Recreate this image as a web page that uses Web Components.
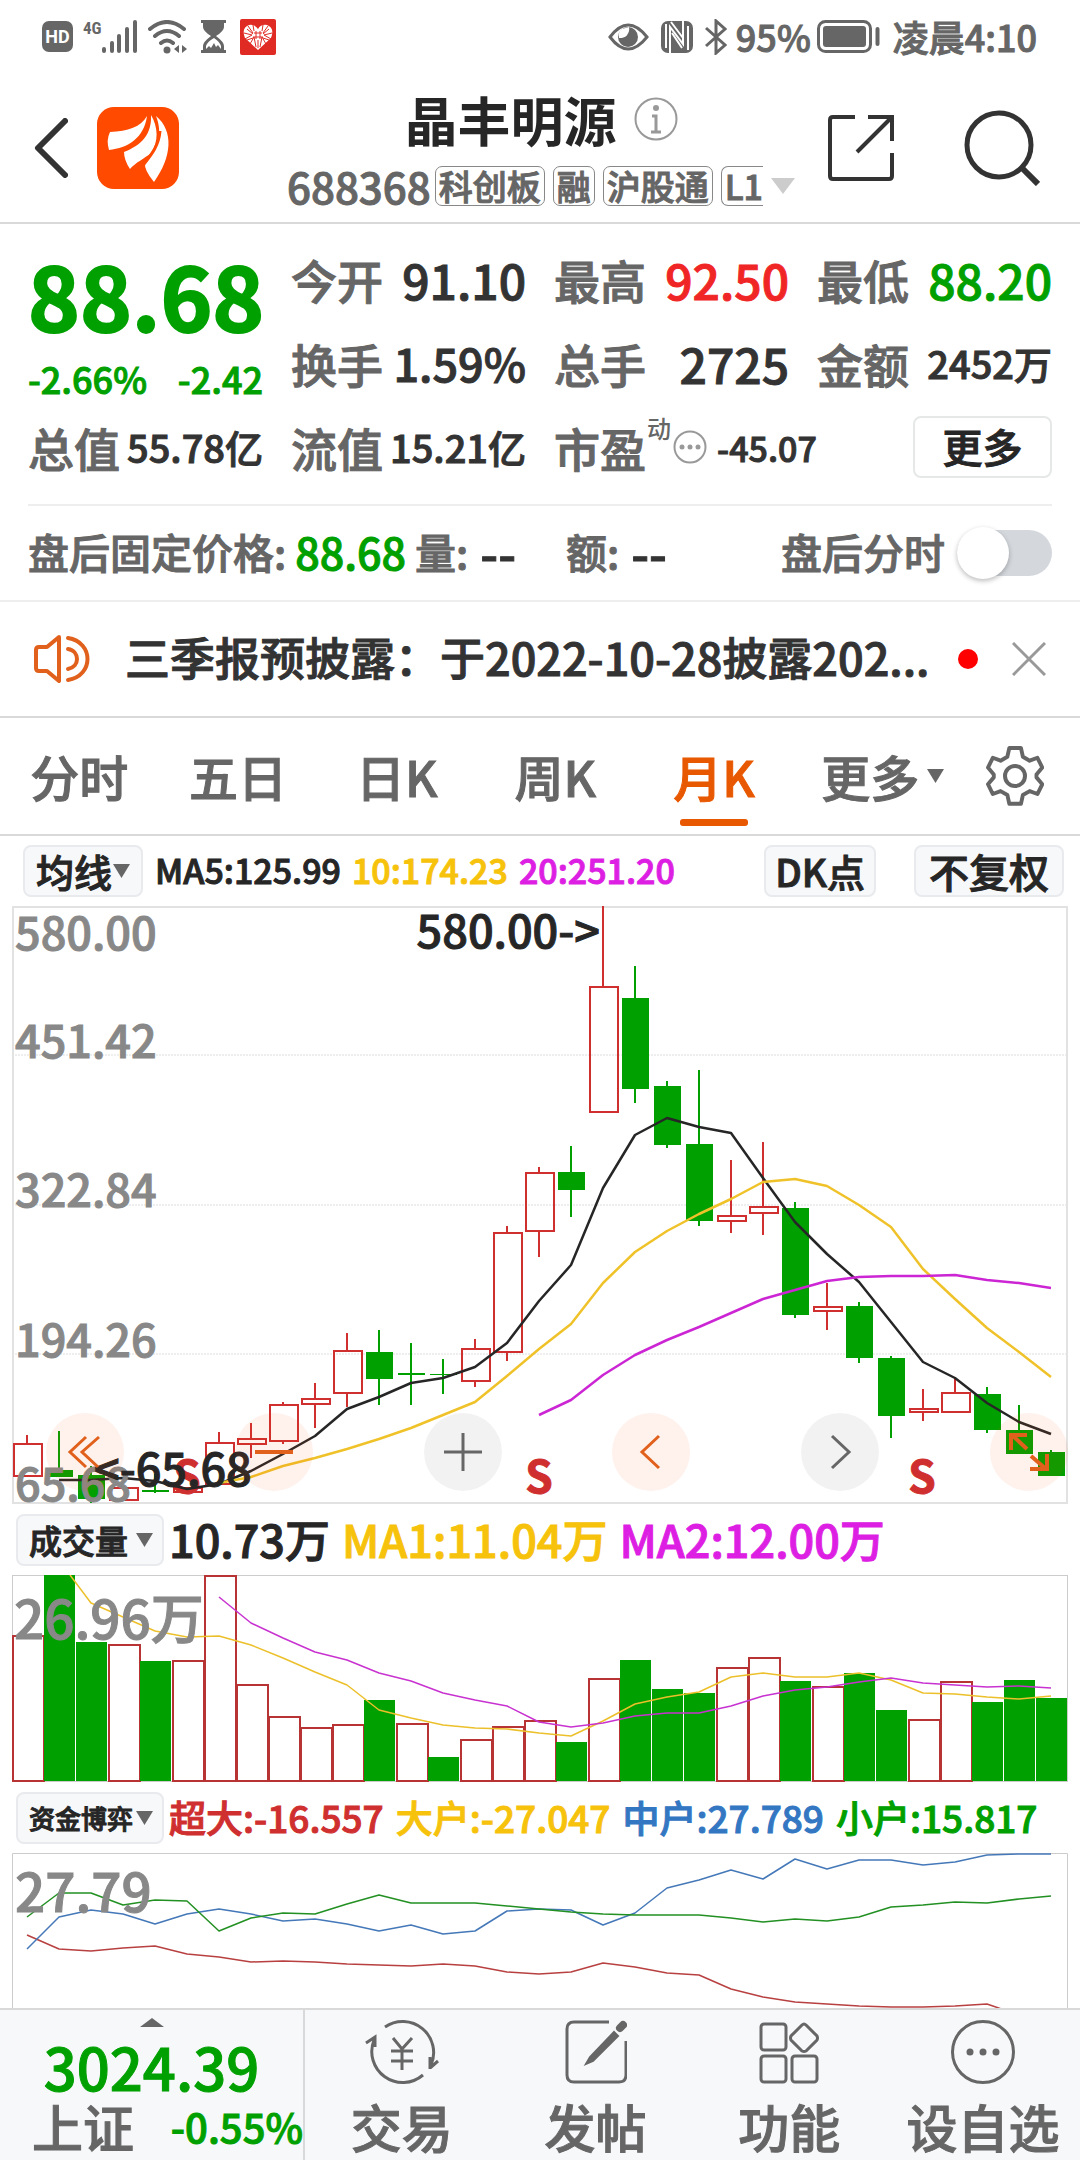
<!DOCTYPE html>
<html lang="zh-CN">
<head>
<meta charset="utf-8">
<meta name="viewport" content="width=device-width, initial-scale=1">
<title>晶丰明源 688368</title>
<style>
:root{--ink:#333;--dark:#262626;--grey:#666;--up:#f02626;--down:#00a000;--accent:#e85800;--line:#d9d9d9;--yellow:#f6c20c;--purple:#dd1fe3;--blue:#3377c3;--red:#cf2f2f}
body{margin:0;background:#fff;color:var(--ink);font-family:"Noto Sans CJK SC","Noto Sans",sans-serif;font-weight:500;-webkit-text-stroke:1px currentColor}
</style>
</head>
<body>
<stock-app></stock-app>
<script>
const BASE = `*{box-sizing:border-box}:host{display:block}
button{font:inherit;color:inherit;background:none;border:0;padding:0;margin:0;display:flex;align-items:center;justify-content:center}
a{color:inherit;text-decoration:none}svg{display:block;flex:none}`;
const define = (name, css, html) => customElements.define(name, class extends HTMLElement {
  connectedCallback() {
    if (this.shadowRoot) return;
    const root = this.attachShadow({mode: 'open'});
    root.innerHTML = `<style>${BASE}${css}</style>` + (typeof html === 'function' ? html(this) : html);
  }
});

/* ---------- status bar ---------- */
define('status-bar', `
:host{display:flex;justify-content:space-between;align-items:center;height:75px;padding:0 43px 2px 42px;color:#666;font-size:36px;line-height:44px}
.g{display:flex;align-items:center}
.hd,.net{-webkit-text-stroke:0}
.hd{width:31px;height:31px;border-radius:7px;background:#666;color:#fff;font:700 18px/31px Roboto,sans-serif;text-align:center}
.net{align-self:flex-start;font:700 17px/18px "Roboto Condensed",Roboto,sans-serif;margin:0 0 0 10px}
.pct{margin:0 6px 0 9px;padding-bottom:2px}.time{margin-left:13px;padding-bottom:2px}`, `
<div class="g"><span class="hd">HD</span><span class="net">4G</span>
<svg width="35" height="33" viewBox="0 0 35 33" stroke="#666" stroke-width="4" stroke-linecap="round"><path d="M2 29v2M10 23v8M17 16v15M25 9v22M33 2v29"/></svg>
<svg width="40" height="34" viewBox="0 0 40 34" style="margin-left:11px" fill="none" stroke="#666" stroke-width="4" stroke-linecap="round"><path d="M2 9Q19-5 36 9M7 16Q19 6 31 16M13 23Q19 18 25 23"/><circle cx="19" cy="30" r="3.500" fill="#666" stroke="none"/><path d="M31 25v8l-5-4zM34 25v8l5-4z" fill="#666" stroke="none"/></svg>
<svg width="25" height="33" viewBox="0 0 25 33" style="margin-left:13px"><path d="M0 0h25v3h-2v4q0 4-8 9 8 6 8 10v4h2v3H0v-3h2v-4q0-4 8-10-8-5-8-9V3H0z" fill="#666"/><path d="M5 29v-3q2-5 8-8 5 3 7 8v3l-3-4-2 2-2-4-3 5-2-2z" fill="#fff"/></svg>
<svg width="36" height="36" viewBox="0 0 36 36" style="margin-left:14px"><rect width="36" height="36" rx="2" fill="#e02a24"/><path d="M18 31L5 19Q1 9 9 6q6-1 9 4 3-5 9-4 8 3 4 13z" fill="#fff"/><path d="M4 14l8 2-7 4M8 7l5 7M13 6l1 6M32 14l-8 2 7 4M28 7l-5 7M23 6l-1 6M10 25l4-7 2 10M26 25l-4-7-2 10M18 29v-8M14 14h8M13 18h10M16 12v8M20 12v8M7 10l6 5M29 10l-6 5M7 21l6-2M29 21l-6-2" stroke="#e02a24" stroke-width="1" fill="none"/></svg></div>
<div class="g">
<svg width="41" height="28" viewBox="0 0 41 28"><path d="M2 14Q20-10 39 14 20 38 2 14z" fill="none" stroke="#666" stroke-width="3"/><circle cx="20" cy="14" r="10" fill="#666"/><path d="M21 4a9 9 0 0 1-10 11Q10 8 14 6z" fill="#fff"/></svg>
<svg width="32" height="32" viewBox="0 0 32 32" style="margin-left:12px"><rect width="32" height="32" rx="7" fill="#666"/><path d="M9 32V6l13 17V0M5 3v24M27 5v24" fill="none" stroke="#fff" stroke-width="2"/><path d="M11 12l10 15M10 1l12 16" stroke="#fff" stroke-width="2"/></svg>
<svg width="22" height="36" viewBox="0 0 22 36" style="margin-left:12px" fill="none" stroke="#666" stroke-width="3"><path d="M1 9l19 17-9 8V2l9 8L1 27"/></svg>
<span class="pct">95%</span>
<svg width="63" height="33" viewBox="0 0 63 33"><rect x="1.500" y="1.500" width="52" height="30" rx="7" fill="none" stroke="#666" stroke-width="3"/><rect x="6" y="6" width="43" height="21" rx="3" fill="#666"/><path d="M60.500 9v15" stroke="#666" stroke-width="4" stroke-linecap="round"/></svg>
<span class="time">凌晨4:10</span></div>`);

/* ---------- header ---------- */
define('stock-tag', `:host{border:1px solid #888;border-radius:7px;height:40px;padding:0 3px;font-size:34px;line-height:38px;white-space:nowrap}
:host([open]){border-right:0;border-radius:7px 0 0 7px;padding-right:0}`, `<slot></slot>`);
define('stock-header', `
:host{display:grid;grid-template-columns:1fr auto 1fr;height:149px;border-bottom:2px solid var(--line);padding:0 40px 0 34px}
.l,.r{display:flex;align-items:center;height:145px}
.l{gap:29px}.r{justify-content:flex-end;gap:69px}
.c{display:flex;flex-direction:column;align-items:center;padding:13px 0 0 8px}
h1{margin:0;font-size:53px;line-height:62px;font-weight:700;color:var(--dark);-webkit-text-stroke:0}
.t{display:flex;align-items:center;gap:17px}
.s{display:flex;align-items:center;gap:8px;color:var(--grey);margin-top:11px;height:50px}
.code{font-size:42px;line-height:48px;margin-right:-4px}`, `
<div class="l"><button aria-label="返回"><svg width="34" height="60" viewBox="0 0 34 60" fill="none" stroke="#333" stroke-width="6" stroke-linecap="round" stroke-linejoin="round"><path d="M31 3L4 30l27 27"/></svg></button>
<svg width="82" height="82" viewBox="0 0 82 82"><rect width="82" height="82" rx="17" fill="#ff4a00"/><path d="M50 9C44 20 31 24 13 25q-4 8-1 18C31 41 47 31 50 9zM54 8c1 19-9 30-27 37q0 8 6 17C38 56 48 51 54 46 62 34 61 20 54 8zM59 9c7 18 2 32-11 47q-1 7 9 19C75 50 77 24 59 9z" fill="#fff"/><path d="M63 24C62 38 55 47 47 57" fill="none" stroke="#ff4a00" stroke-width="3"/></svg></div>
<div class="c"><div class="t"><h1>晶丰明源</h1><button aria-label="信息"><svg width="44" height="44" viewBox="0 0 44 44"><circle cx="22" cy="22" r="20.500" fill="none" stroke="#999" stroke-width="2"/><circle cx="22" cy="11" r="3" fill="#999"/><path d="M18 19h4v16M17 35h10" fill="none" stroke="#999" stroke-width="3"/></svg></button></div>
<div class="s"><span class="code">688368</span><stock-tag>科创板</stock-tag><stock-tag>融</stock-tag><stock-tag>沪股通</stock-tag><stock-tag open>L1</stock-tag><svg width="24" height="16" viewBox="0 0 24 16"><path d="M0 0h24L12 16z" fill="#ccc"/></svg></div></div>
<div class="r"><button aria-label="分享"><svg width="68" height="68" viewBox="0 0 68 68" fill="none" stroke="#333" stroke-width="4"><path d="M28 3H6Q3 3 3 6v56q0 3 3 3h56q3 0 3-3V39M41 3h24v24M65 3L30 38"/></svg></button>
<button aria-label="搜索"><svg width="76" height="76" viewBox="0 0 76 76" fill="none" stroke="#333" stroke-width="5"><circle cx="35" cy="35" r="32"/><path d="M58 58l16 16" stroke-width="6"/></svg></button></div>`);

/* ---------- quote panel ---------- */
define('quote-cell', `
:host{display:flex;align-items:center;justify-content:space-between;height:84px;white-space:nowrap;min-width:0}
.k{font-size:46px;line-height:68px;color:var(--grey)}
.v{font-size:48px;line-height:68px}
:host([size=m]) .v{font-size:38px}:host([size=l]) .v{font-size:45px}
:host([tone=up]) .v{color:var(--up)}:host([tone=down]) .v{color:var(--down)}`,
 h => `<span class="k">${h.getAttribute('label')}</span><span class="v"><slot></slot></span>`);
define('quote-panel', `
:host{padding:13px 28px 0}
.grid{display:grid;grid-template-columns:repeat(4,minmax(0,1fr));column-gap:28px;border-bottom:2px solid #eee;padding-bottom:15px}
.price{grid-row:span 2;color:var(--down);display:flex;flex-direction:column;justify-content:space-between;padding:12px 0 5px}
.big{font-size:88px;line-height:90px;font-weight:700;-webkit-text-stroke:2px currentColor}
.chg{display:flex;justify-content:space-between;font-size:36px;line-height:44px}
.pe{grid-column:span 2;display:flex;align-items:center;height:84px;white-space:nowrap}
.k{font-size:46px;line-height:68px;color:var(--grey)}
sup{align-self:flex-start;font-size:24px;line-height:28px;color:var(--grey);margin:9px 2px 0 1px;-webkit-text-stroke:0}
.pe .v{font-size:34px;margin-left:10px}
.more{margin-left:auto;width:139px;height:62px;border:2px solid #e6e8e8;border-radius:8px;font-size:40px;color:var(--dark);line-height:50px;padding-bottom:2px}
.fixed{display:flex;align-items:center;height:94px;font-size:41px;line-height:60px;color:var(--grey);white-space:nowrap}
.fixed span,b,label{padding-bottom:4px}
b{font-weight:500;color:var(--ink);margin-left:12px;font-size:50px}.g{color:var(--down);font-size:43px;margin:0 9px}
.amt{margin-left:50px}label{margin-left:auto}
input{appearance:none;margin:0 0 0 12px;width:95px;height:46px;border-radius:23px;background:#d4d8dd;display:flex;align-items:center}
input::before{content:"";width:52px;height:52px;border-radius:50%;background:#fff;box-shadow:0 2px 5px #0004;flex:none}
input:checked{background:var(--accent);justify-content:flex-end}`, `
<div class="grid">
<div class="price"><span class="big">88.68</span><div class="chg"><span>-2.66%</span><span>-2.42</span></div></div>
<quote-cell label="今开">91.10</quote-cell><quote-cell label="最高" tone="up">92.50</quote-cell><quote-cell label="最低" tone="down">88.20</quote-cell>
<quote-cell label="换手" size="l">1.59%</quote-cell><quote-cell label="总手">2725</quote-cell><quote-cell label="金额" size="m">2452万</quote-cell>
<quote-cell label="总值" size="m">55.78亿</quote-cell><quote-cell label="流值" size="m">15.21亿</quote-cell>
<div class="pe"><span class="k">市盈</span><sup>动</sup><svg width="34" height="34" viewBox="0 0 34 34"><circle cx="17" cy="17" r="15.500" fill="none" stroke="#999" stroke-width="2"/><g fill="#999"><circle cx="9" cy="17" r="2.500"/><circle cx="17" cy="17" r="2.500"/><circle cx="25" cy="17" r="2.500"/></g></svg><span class="v">-45.07</span><button class="more">更多</button></div>
</div>
<div class="fixed"><span>盘后固定价格:</span><b class="g">88.68</b><span>量:</span><b>--</b><span class="amt">额:</span><b>--</b><label for="after">盘后分时</label><input type="checkbox" role="switch" id="after"></div>`);

/* ---------- announcement ---------- */
define('news-bar', `
:host{display:flex;align-items:center;height:118px;padding:0 34px;border-top:2px solid #eee;border-bottom:2px solid var(--line)}
a{flex:1;min-width:0;font-size:45px;line-height:68px;padding-bottom:4px;margin-left:34px;white-space:nowrap;overflow:hidden}
.dot{width:20px;height:20px;border-radius:50%;background:#f00;margin:0 34px 0 20px}`, `
<svg width="57" height="50" viewBox="0 0 57 50" fill="none" stroke="#e0601c" stroke-width="4" stroke-linejoin="round" stroke-linecap="round"><path d="M25 3L13 13H5q-3 0-3 3v18q0 3 3 3h8l12 10zM34 4c26 4 26 38 0 42M34 15c12 2 12 18 0 20"/></svg>
<a href="#news">三季报预披露：于2022-10-28披露202...</a><span class="dot"></span>
<button aria-label="关闭"><svg width="34" height="34" viewBox="0 0 34 34" stroke="#999" stroke-width="3"><path d="M1 1l32 32M33 1L1 33"/></svg></button>`);

/* ---------- period tabs ---------- */
const tri = (c = '#666', w = 17, h = 14) => `<svg width="${w}" height="${h}" viewBox="0 0 17 14"><path d="M0 0h17L8.500 14z" fill="${c}"/></svg>`;
define('period-tabs', `
:host{display:flex;align-items:center;height:118px;padding:0 36px 0 0;border-bottom:2px solid var(--line);color:var(--grey);font-size:49px;line-height:72px}
nav{flex:1;display:flex;margin-right:24px}
button{position:relative;height:116px;gap:8px}
nav button{flex:1 1 0}
nav button:last-child{padding-left:10px}
.on{color:var(--accent)}
.on::after{content:"";position:absolute;left:50%;margin-left:-34px;bottom:8px;width:68px;height:7px;border-radius:3px;background:var(--accent)}`, `
<nav><button>分时</button><button>五日</button><button>日K</button><button>周K</button><button class="on" aria-current="true">月K</button><button>更多${tri()}</button></nav>
<button aria-label="设置"><svg width="58" height="60" viewBox="0 0 58 60" fill="none" stroke="#666" stroke-width="4" stroke-linejoin="round"><path d="M23 2h12l2 9 7 4 8-3 5 10-6 7v3l6 7-5 10-8-3-7 4-2 9H23l-2-9-7-4-8 3L1 39l6-7v-3l-6-7L6 12l8 3 7-4z" transform="translate(1 0) scale(.97 .98)"/><circle cx="29" cy="30" r="10"/></svg></button>`);

/* ---------- indicator bars ---------- */
define('pill-button', `
button{height:52px;padding:0 11px;border:2px solid #e8eaed;border-radius:8px;background:#f7f8fa;color:var(--dark);font-size:38px;line-height:46px;gap:1px;white-space:nowrap}
:host([wide]) button{padding:0 13px;font-size:40px}
:host([tight]) button{padding:0 9px}
:host([fixed]) button{width:148px;padding:0 9px 0 11px;justify-content:space-between;font-size:33px}
:host([small]) button{font-size:26px}`,
 h => `<button><slot></slot>${h.hasAttribute('menu') ? tri() : ''}</button>`);
define('indicator-bar', `
:host{display:flex;align-items:center;height:71px;padding:0 16px;gap:12px;font-size:45px;line-height:66px;white-space:nowrap}
:host([kind=ma]){font-size:34px;gap:11px;height:70px;padding:0 16px 0 23px}
:host([kind=fund]){font-size:37px}
::slotted([slot=menu]){margin-right:-7px}
:host([kind=ma]) ::slotted([slot=menu]){margin-right:1px}
::slotted(span){padding-bottom:2px}`, `<slot name="menu"></slot><slot></slot>`);

/* ---------- charts ---------- */
const cx = i => 15 + 32 * i;
const line = (start, ys, color, w, lead = '') =>
  `<polyline points="${lead}${ys.map((y, k) => cx(start + k) + ',' + y).join(' ')}" fill="none" stroke="${color}" stroke-width="${w}" stroke-linejoin="round"/>`;
const CHART = `:host{position:relative;margin:0 12px}svg{width:100%;height:auto;overflow:hidden}
text{font-family:inherit;font-weight:500;-webkit-text-stroke:0}.ax{fill:#888;stroke:#888;stroke-width:1px}.note{fill:#262626;stroke:#262626;stroke-width:1px}`;
/* colour, high, body top, body bottom, low */
const CANDLES = [['R',529,538,570,570],['G',525,564,571,571],['G',560,569,593,597],['R',582,582,594,594],['G',568,584,586,587],['R',582,582,586,586],['R',526,537,578,578],['R',517,533,538,552],['R',496,499,535,538],['R',477,493,498,522],['R',427,445,487,501],['G',424,446,473,499],['G',437,467,469,499],['G',453,468,469,488],['R',433,443,475,481],['R',320,327,446,455],['R',261,267,325,351],['G',240,266,284,311],['R',0,81,206,206],['G',60,92,183,197],['G',175,180,239,242],['G',164,238,315,320],['R',254,310,315,327],['R',236,301,307,329],['G',296,302,409,412],['R',377,401,405,424],['G',396,400,452,457],['G',450,452,510,532],['R',483,503,506,515],['R',471,487,506,506],['G',481,488,524,527],['G',499,524,548,548],['G',544,546,570,570]];
const candle = ([c, h, t, b, l], i) => { const x = cx(i);
  return c === 'G'
    ? `<path d="M${x} ${h}V${l}" stroke="#00a000" stroke-width="2"/><rect x="${x - 13}" y="${t}" width="27" height="${b - t}" fill="#00a000"/>`
    : `<path d="M${x} ${h}V${t}M${x} ${b}V${l}" stroke="#cf2f2f" stroke-width="2"/><rect x="${x - 13}" y="${t}" width="28" height="${b - t}" fill="none" stroke="#cf2f2f" stroke-width="2"/>`; };
define('k-chart', CHART + `
.tools{position:absolute;left:34px;right:0;bottom:13px;display:flex;justify-content:space-between}
.tools button{width:78px;height:78px;border-radius:50%;background:#ff500014}
.tools .n{background:#0000000d}
.s{font-weight:700;fill:#cf2f2f;stroke:#cf2f2f;font-size:44px;text-anchor:middle}`, `
<svg viewBox="0 0 1056 598" font-size="45">
<g stroke="#eee" stroke-width="2" stroke-dasharray="2 1"><path d="M0 149H1056M0 299H1056M0 448H1056"/></g>
<rect x="1" y="1" width="1054" height="596" fill="none" stroke="#e2e2e2" stroke-width="2"/>
<text class="s" x="175" y="587">S</text><text class="s" x="527" y="587">S</text><text class="s" x="910" y="587">S</text>
${CANDLES.map(candle).join('')}
${line(1,[574,574,572,575,583,578,565,548,530,503,491,477,472,461,437,395,359,282,229,212,221,227,272,316,348,376,416,456,472,497,516,528],'#262626',2.5)}
${line(6,[577,571,560,552,543,533,522,509,496,470,443,418,377,346,325,308,293,276,273,280,299,321,363,393,422,446,471],'#f0c22a',2.5)}
${line(16,[509,494,469,449,434,421,407,393,384,375,371,370,370,369,374,377,382],'#cc26d4',2.5)}
<g class="ax"><text x="3" y="44">580.00</text><text x="3" y="152">451.42</text><text x="3" y="301">322.84</text><text x="3" y="451">194.26</text><text x="3" y="595">65.68</text></g>
<g class="note"><text x="588" y="42" text-anchor="end">580.00-&gt;</text><text x="82" y="580">&lt;-65.68</text></g>
</svg>
<div class="tools">
<button aria-label="最早"><svg style="width:38px;height:34px" viewBox="0 0 38 34" fill="none" stroke="#e0601c" stroke-width="3"><path d="M20 2L4 17l16 15M33 2L16 17l16 15"/></svg></button>
<button aria-label="缩小"><svg style="width:38px;height:34px" viewBox="0 0 38 34"><path d="M0 17h38" stroke="#e0601c" stroke-width="4"/></svg></button>
<button class="n" aria-label="放大"><svg style="width:38px;height:38px" viewBox="0 0 38 38"><path d="M0 19h38M19 0v38" stroke="#666" stroke-width="3"/></svg></button>
<button aria-label="左移"><svg style="width:24px;height:36px" viewBox="0 0 24 36" fill="none" stroke="#e0601c" stroke-width="3"><path d="M20 2L3 18l17 16"/></svg></button>
<button class="n" aria-label="右移"><svg style="width:24px;height:36px" viewBox="0 0 24 36" fill="none" stroke="#666" stroke-width="3"><path d="M4 2l17 16L4 34"/></svg></button>
<button aria-label="全屏"><svg style="width:40px;height:40px" viewBox="0 0 40 40" fill="none" stroke="#e0601c" stroke-width="4"><path d="M2 18V3h16M3 3l15 14M38 22v15H21M37 37L22 24"/></svg></button>
</div>`);
const VOL = 'R60 G0 G67 R69 G86 R85 R0 R109 R141 R152 R149 G125 R148 G182 R164 R151 R145 G167 R103 G85 G114 G118 R92 R82 G106 R111 G98 G135 R144 R106 G127 G105 G123'.split(' ');
define('volume-chart', CHART, `
<svg viewBox="0 0 1056 207" font-size="53">
<rect x=".500" y=".500" width="1055" height="206" fill="none" stroke="#ccc"/>
${VOL.map((s, i) => { const y = +s.slice(1), x = 32 * i; return s[0] === 'G'
  ? `<rect x="${x}" y="${y}" width="31" height="${206 - y}" fill="#00a000"/>`
  : `<rect x="${x + 1}" y="${y + 1}" width="31" height="${205 - y}" fill="none" stroke="#b83434" stroke-width="2"/>`; }).join('')}
${line(2,[28,42,56,62,61,70,83,97,110,135,143,150,153,154,158,161,146,129,122,117,102,98,102,102,98,105,118,119,122,124,121],'#ecc02a',1.5,'58,0 ')}
${line(6,[22,48,63,77,85,98,106,118,125,131,147,152,148,141,138,138,131,121,115,112,107,103,108,110,112,111,113],'#c832d0',1.5)}
<text class="ax" x="2" y="64">26.96万</text></svg>`);
define('fund-chart', CHART, `
<svg viewBox="0 0 1056 155" font-size="53">
<path d="M.500 155V.500H1055.500V155" fill="none" stroke="#ccc"/>
${line(0,[82,96,98,95,93,101,104,109,108,109,111,112,113,111,113,119,121,119,110,114,120,122,136,144,149,151,153,154,154,153,151,162],'#b84040',1.5)}
${line(0,[96,64,57,61,71,61,56,61,68,66,71,78,72,81,78,58,56,57,72,60,35,27,17,26,6,16,7,7,12,9,2,1,1],'#4478b8',1.5)}
${line(0,[64,40,40,52,47,48,78,65,60,61,51,42,50,50,50,53,56,59,61,62,62,62,65,69,66,68,64,54,52,49,50,46,43],'#229022',1.5)}
<text class="ax" x="3" y="59">27.79</text></svg>`);

/* ---------- bottom navigation ---------- */
define('nav-item', `:host{flex:1;min-width:0}
a{display:flex;flex-direction:column;align-items:center;color:var(--grey);font-size:51px;line-height:60px;white-space:nowrap;padding-top:9px}
.l{margin-top:11px}`, `<a href="#nav"><slot name="icon"></slot><span class="l"><slot></slot></span></a>`);
define('bottom-nav', `
:host{display:flex;height:152px;border-top:2px solid var(--line);background:#f7f8fa}
.idx{width:305px;border-right:2px solid var(--line);display:flex;flex-direction:column;color:var(--down);padding-top:8px}
.idx svg{align-self:center}
.p{font-size:58px;line-height:60px;text-align:center;margin-top:9px}
.r{display:flex;justify-content:space-between;align-items:center;padding-left:32px;line-height:60px;font-size:40px;white-space:nowrap}
.n{font-size:51px;color:var(--grey)}
.i{fill:none;stroke:#666;stroke-width:3}`, `
<a class="idx" href="#index"><svg width="24" height="9" viewBox="0 0 24 9"><path d="M0 9L12 0l12 9z" fill="#666"/></svg><span class="p">3024.39</span><span class="r"><span class="n">上证</span><span>-0.55%</span></span></a>
<nav-item><svg slot="icon" class="i" width="74" height="66" viewBox="0 0 74 66"><path d="M20 8a31 31 0 0 1 46 38M65 49l8-7M65 50V38M58 56A31 31 0 0 1 9 21M1 24l9-6v10M28 19l9 11 10-11M26 32h22M26 42h22M37 30v21"/></svg>交易</nav-item>
<nav-item><svg slot="icon" class="i" width="62" height="66" viewBox="0 0 62 66"><path d="M44 3H9Q2 3 2 10v46q0 7 7 7h45q7 0 7-7V22"/><path d="M55 9l3-3" stroke-width="8" stroke-linecap="round"/><path d="M49 13L25 38l-4 7 7-3 25-25z" fill="#666" stroke-width="2"/></svg>发帖</nav-item>
<nav-item><svg slot="icon" class="i" width="60" height="66" viewBox="0 0 60 66"><rect x="2" y="5" width="25" height="26" rx="3"/><rect x="2" y="37" width="25" height="26" rx="3"/><rect x="33" y="37" width="25" height="26" rx="3"/><path d="M43 6q2-2 4 0l11 11q1 2 0 4L47 32q-2 1-4 0L32 21q-1-2 0-4z"/></svg>功能</nav-item>
<nav-item><svg slot="icon" class="i" width="66" height="66" viewBox="0 0 66 66"><circle cx="33" cy="33" r="30.500"/><g fill="#666" stroke="none"><circle cx="20" cy="33" r="3.500"/><circle cx="33" cy="33" r="3.500"/><circle cx="46" cy="33" r="3.500"/></g></svg>设自选</nav-item>`);

/* ---------- page ---------- */
define('stock-app', `
:host{min-height:100vh;display:flex;flex-direction:column}
.push{margin-left:auto;display:flex;gap:38px}
.y{color:var(--yellow)}.p{color:var(--purple)}.r{color:var(--red)}.b{color:var(--blue)}.g{color:var(--down)}.d{color:var(--dark)}
bottom-nav{margin-top:auto}`, `
<status-bar></status-bar>
<stock-header></stock-header>
<quote-panel></quote-panel>
<news-bar></news-bar>
<period-tabs></period-tabs>
<indicator-bar kind="ma"><pill-button slot="menu" menu>均线</pill-button><span class="d">MA5:125.99</span><span class="y">10:174.23</span><span class="p">20:251.20</span><div class="push"><pill-button tight>DK点</pill-button><pill-button wide>不复权</pill-button></div></indicator-bar>
<k-chart></k-chart>
<indicator-bar><pill-button slot="menu" menu fixed>成交量</pill-button><span class="d">10.73万</span><span class="y">MA1:11.04万</span><span class="p">MA2:12.00万</span></indicator-bar>
<volume-chart></volume-chart>
<indicator-bar kind="fund"><pill-button slot="menu" menu fixed small>资金博弈</pill-button><span class="r">超大:-16.557</span><span class="y">大户:-27.047</span><span class="b">中户:27.789</span><span class="g">小户:15.817</span></indicator-bar>
<fund-chart></fund-chart>
<bottom-nav></bottom-nav>`);
</script>
</body>
</html>
